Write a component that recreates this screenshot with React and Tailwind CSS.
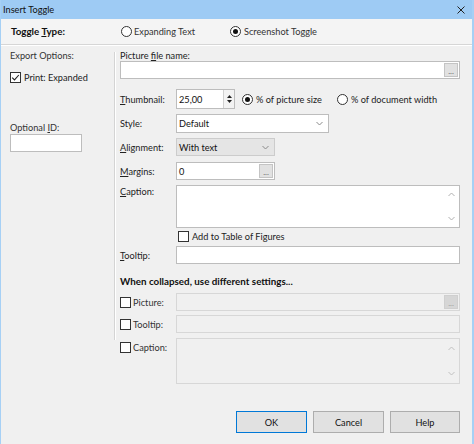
import React from "react";

const U = ({ children }) => <span className="underline underline-offset-1">{children}</span>;

function Radio({ checked }) {
  return (
    <span className="flex items-center justify-center w-[11px] h-[11px] rounded-full border border-[#333] bg-white shrink-0">
      {checked && <span className="w-[5px] h-[5px] rounded-full bg-[#111]" />}
    </span>
  );
}

function Check({ checked }) {
  return (
    <span className="flex items-center justify-center w-[11px] h-[11px] border border-[#333] bg-white shrink-0">
      {checked && (
        <svg width="9" height="9" viewBox="0 0 9 9">
          <path d="M1.2 4.6 L3.5 6.9 L7.8 2" fill="none" stroke="#222" strokeWidth="1.1" />
        </svg>
      )}
    </span>
  );
}

function Dots({ disabled }) {
  return (
    <span
      className={
        "flex items-end justify-center w-[14px] h-[14px] border mr-[1px] text-[8px] leading-[9px] " +
        (disabled ? "bg-[#d6d6d6] border-[#cfcfcf] text-[#9a9a9a]" : "bg-[#e1e1e1] border-[#c4c4c4] text-[#666]")
      }
    >
      ...
    </span>
  );
}

function Chevron({ up, color = "#8a8a8a" }) {
  return (
    <svg width="7" height="5" viewBox="0 0 7 5">
      <path d={up ? "M0.5 4 L3.5 1 L6.5 4" : "M0.5 1 L3.5 4 L6.5 1"} fill="none" stroke={color} strokeWidth="1" />
    </svg>
  );
}

function Label({ children, className = "" }) {
  return <div className={"w-[56px] shrink-0 text-[#222] " + className}>{children}</div>;
}

export default function App() {
  return (
    <div className="w-[474px] h-[444px] bg-[#f0f0f0] flex flex-col font-['Lato','Liberation_Sans',sans-serif] text-[9.2px] leading-[11px] text-[#111] whitespace-nowrap border-r-[2px] border-l border-[#a6d0f5] overflow-hidden">
      {/* title bar */}
      <div className="h-[19px] bg-[#9ecbf4] flex items-center justify-between pl-[2px] pr-[7px] shrink-0">
        <span className="text-[9.2px] text-[#111]">Insert Toggle</span>
        <svg width="8" height="8" viewBox="0 0 8 8">
          <path d="M0.5 0.5 L7.5 7.5 M7.5 0.5 L0.5 7.5" stroke="#222" strokeWidth="1" />
        </svg>
      </div>

      {/* toggle type row */}
      <div className="h-[26px] bg-[#f4f4f4] border-b border-[#d6d6d6] flex items-center shrink-0">
        <div className="w-[120px] pl-[10px] font-bold text-[9.8px]">
          Toggle <U>T</U>ype:
        </div>
        <div className="flex items-center gap-[2px] w-[109px]">
          <Radio />
          <span className="text-[#333]">Expanding Text</span>
        </div>
        <div className="flex items-center gap-[3px]">
          <Radio checked />
          <span className="text-[#333]">Screenshot Toggle</span>
        </div>
      </div>

      {/* body */}
      <div className="flex flex-1 border-t border-white min-h-0">
        {/* left column */}
        <div className="w-[113px] shrink-0 pl-[9px] flex flex-col">
          <div className="mt-[4px] text-[#333]">Export Options:</div>
          <div className="mt-[11px] flex items-center gap-[3px]">
            <Check checked />
            <span className="text-[#222]">Print: Expanded</span>
          </div>
          <div className="mt-[39px] text-[#333]">
            Optional <U>I</U>D:
          </div>
          <div className="mt-[1px] w-[72px] h-[18px] bg-white border border-[#bdbdbd]" />
        </div>

        {/* divider */}
        <div className="w-[2px] h-[288px] mt-[6px] border-l border-[#d4d4d4] border-r border-r-white shrink-0" />

        {/* right column */}
        <div className="flex-1 min-w-0 pl-[4px] pr-[12px] flex flex-col">
          <div className="mt-[4px] text-[#222]">
            Picture <U>f</U>ile name:
          </div>
          <div className="h-[18px] bg-white border border-[#bdbdbd] flex items-center justify-end">
            <Dots />
          </div>

          {/* thumbnail */}
          <div className="mt-[10px] flex items-center h-[20px]">
            <Label>
              <U>T</U>humbnail:
            </Label>
            <div className="w-[59px] h-[20px] bg-white border border-[#bdbdbd] flex items-center justify-between pl-[2px]">
              <span>25,00</span>
              <span className="w-[11px] h-[18px] border-l border-[#d0d0d0] bg-[#f3f3f3] flex flex-col items-center justify-center gap-[2px]">
                <svg width="5" height="3" viewBox="0 0 5 3"><path d="M0 3 L2.5 0 L5 3 Z" fill="#222" /></svg>
                <svg width="5" height="3" viewBox="0 0 5 3"><path d="M0 0 L2.5 3 L5 0 Z" fill="#222" /></svg>
              </span>
            </div>
            <div className="ml-[7px] flex items-center gap-[3px] w-[95px]">
              <Radio checked />
              <span className="text-[#222]">% of picture size</span>
            </div>
            <div className="flex items-center gap-[3px]">
              <Radio />
              <span className="text-[#222]">% of document width</span>
            </div>
          </div>

          {/* style */}
          <div className="mt-[5px] flex items-center h-[19px]">
            <Label>Style:</Label>
            <div className="w-[153px] h-[19px] bg-white border border-[#bdbdbd] flex items-center justify-between pl-[2px] pr-[5px]">
              <span>Default</span>
              <Chevron />
            </div>
          </div>

          {/* alignment */}
          <div className="mt-[5px] flex items-center h-[18px]">
            <Label>
              <U>A</U>lignment:
            </Label>
            <div className="w-[99px] h-[18px] bg-[#e5e5e5] border border-[#cccccc] flex items-center justify-between pl-[2px] pr-[5px]">
              <span>With text</span>
              <Chevron />
            </div>
          </div>

          {/* margins */}
          <div className="mt-[6px] flex items-center h-[18px]">
            <Label>
              <U>M</U>argins:
            </Label>
            <div className="w-[99px] h-[18px] bg-white border border-[#bdbdbd] flex items-center justify-between pl-[2px]">
              <span>0</span>
              <Dots />
            </div>
          </div>

          {/* caption */}
          <div className="mt-[5px] flex items-start">
            <Label className="mt-[1px]">
              <U>C</U>aption:
            </Label>
            <div className="flex-1 h-[43px] bg-white border border-[#bdbdbd] flex flex-col items-end justify-between py-[6px] pr-[4px]">
              <Chevron up color="#b0b0b0" />
              <Chevron color="#b0b0b0" />
            </div>
          </div>
          <div className="mt-[2px] ml-[58px] flex items-center gap-[3px] h-[13px]">
            <Check />
            <span className="text-[#222]">Add to Table of Figures</span>
          </div>

          {/* tooltip */}
          <div className="mt-[3px] flex items-center h-[18px]">
            <Label>
              <U>T</U>ooltip:
            </Label>
            <div className="flex-1 h-[18px] bg-white border border-[#bdbdbd]" />
          </div>

          <div className="mt-[12px] font-bold text-[9.8px] text-[#111]">When collapsed, use different settings...</div>

          {/* picture */}
          <div className="mt-[6px] flex items-center h-[18px]">
            <div className="w-[56px] shrink-0 flex items-center gap-[2px]">
              <Check />
              <span className="text-[#333]">Picture:</span>
            </div>
            <div className="flex-1 h-[18px] bg-[#f0f0f0] border border-[#d7d7d7] flex items-center justify-end">
              <Dots disabled />
            </div>
          </div>

          {/* tooltip disabled */}
          <div className="mt-[4px] flex items-center h-[18px]">
            <div className="w-[56px] shrink-0 flex items-center gap-[2px]">
              <Check />
              <span className="text-[#333]">Tooltip:</span>
            </div>
            <div className="flex-1 h-[18px] bg-[#f0f0f0] border border-[#d7d7d7]" />
          </div>

          {/* caption disabled */}
          <div className="mt-[5px] flex items-start">
            <div className="w-[56px] shrink-0 flex items-center gap-[2px] mt-[4px]">
              <Check />
              <span className="text-[#333]">Caption:</span>
            </div>
            <div className="flex-1 h-[46px] bg-[#f0f0f0] border border-[#d7d7d7] flex flex-col items-end justify-between py-[7px] pr-[4px]">
              <Chevron up color="#c0c0c0" />
              <Chevron color="#c0c0c0" />
            </div>
          </div>

          {/* buttons */}
          <div className="mt-[27px] flex justify-end gap-[6px]">
            <button className="w-[71px] h-[22px] bg-[#e1e1e1] border border-[#0078d7] text-[#111] text-[9.2px]">OK</button>
            <button className="w-[71px] h-[22px] bg-[#e1e1e1] border border-[#adadad] text-[#111] text-[9.2px]">Cancel</button>
            <button className="w-[70px] h-[22px] bg-[#e1e1e1] border border-[#adadad] text-[#111] text-[9.2px]">Help</button>
          </div>
        </div>
      </div>
    </div>
  );
}
